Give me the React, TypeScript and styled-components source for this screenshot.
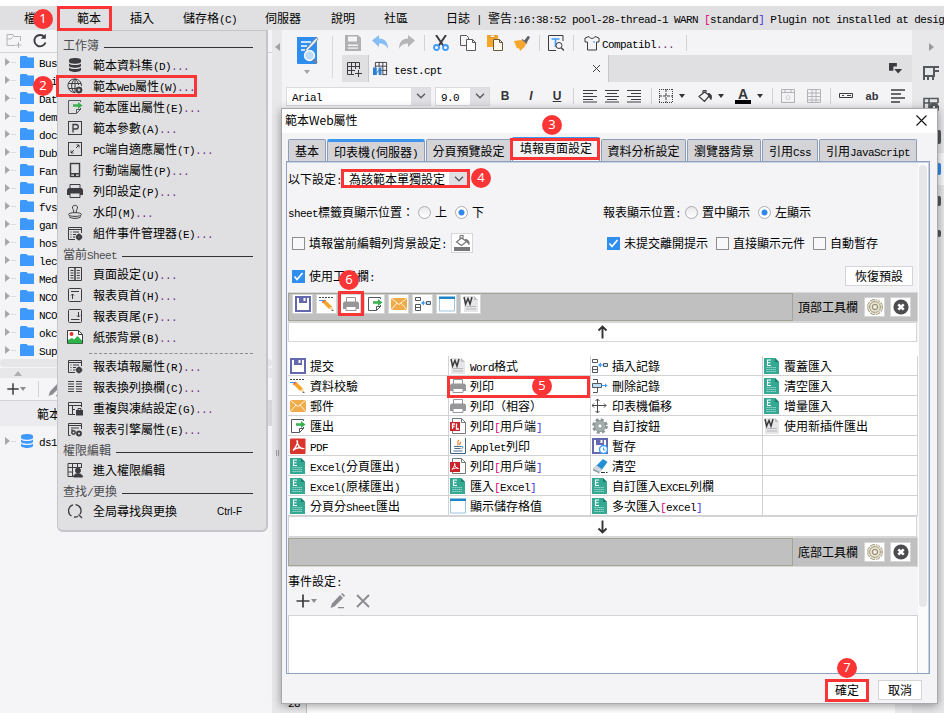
import React from "react";
import styled, { createGlobalStyle } from "styled-components";

const Global = createGlobalStyle`
  * { box-sizing: border-box; }
  body {
    margin: 0; width: 944px; height: 713px; overflow: hidden; background: #fff;
    font: 12px/16px "Noto Sans CJK TC", "Liberation Sans", sans-serif; color: #000;
  }
  svg { display: block; flex: none; }
`;

/* ---------- text ---------- */
const Label = styled.span<{ $color?: string; $ml?: number }>`
  white-space: pre; line-height: 16px; flex: none;
  color: ${(p) => p.$color || "inherit"};
  margin-left: ${(p) => p.$ml || 0}px;
`;
const Latin = styled.span<{ $tint?: string }>`
  font-family: "Liberation Mono", monospace; font-size: 11px; letter-spacing: -0.6px; line-height: 0;
  color: ${(p) => p.$tint || "inherit"};
`;
const tint = (s: string) => (s === "[" ? "#e0007a" : s === "]" ? "#4a30e0" : s === "..." ? "#6a2c80" : undefined);
const T = ({ children, color, ml }: { children: string; color?: string; ml?: number }) => (
  <Label $color={color} $ml={ml}>
    {children.split(/(\.\.\.|\[|\]|[\x20-\x5a\x5c\x5e-\x7e]+?(?=\.\.\.|[^\x20-\x5a\x5c\x5e-\x7e]|$))/).filter(Boolean).map((s, i) =>
      /^[\x20-\x7e]+$/.test(s) ? <Latin key={i} $tint={tint(s)}>{s}</Latin> : s
    )}
  </Label>
);

/* ---------- icons ---------- */
const K = "#3c3c40";
const glyphs: Record<string, React.ReactNode> = {
  db: <g fill={K}><path d="M2 3.2C2 .4 14 .4 14 3.2v1.5c0 2.6-12 2.6-12 0z" /><path d="M2 6.6c1.500 2 10.500 2 12 0v2.200c0 2.600-12 2.600-12 0z" /><path d="M2 10.600c1.500 2 10.500 2 12 0v2.200c0 2.900-12 2.900-12 0z" /></g>,
  dbBlue: <g fill="#3d9afc"><path d="M2 3.200C2 .4 14 .4 14 3.200v1.500c0 2.600-12 2.600-12 0z" /><path d="M2 6.600c1.500 2 10.500 2 12 0v2.200c0 2.600-12 2.600-12 0z" /><path d="M2 10.600c1.500 2 10.500 2 12 0v2.200c0 2.900-12 2.900-12 0z" /></g>,
  globe: <g fill="none" stroke={K}><path d="M8 14.500A6.800 6.800 0 1 1 14.500 8M1.500 5.500h12.500M1.500 10.500H9M8 1v14M8 1C3.500 4 3.500 12 8 15M8 1c2.500 2 3.500 4 3.500 6" /><circle cx="12" cy="12" r="2.300" strokeWidth="1.800" /><path d="M12 8.500v7M8.500 12h7M9.500 9.500l5 5M14.500 9.500l-5 5" strokeWidth=".8" /><circle cx="12" cy="12" r="1" fill="#e0e0e2" stroke="none" /></g>,
  export: <g fill="none"><path d="M13.500 3V1.500h-12v13h8l4-4h-4v4M13.500 9v2" stroke="#55585c" /><path d="M6 5.300h5V3l4.500 3.500L11 10V7.700H6z" fill="#3bb04f" /></g>,
  p: <g fill="none" stroke={K}><rect x="1.500" y="1.500" width="13" height="13" /><path d="M6 12.500V4.500h3a2 2 0 0 1 0 4.500H6" strokeWidth="1.300" /></g>,
  fit: <g fill="none" stroke={K}><rect x="1.500" y="1.500" width="13" height="13" /><path d="M9 7l3-3M9.500 4H12v2.500M7 9l-3 3M4 9.500V12h2.500" /></g>,
  phone: <g fill="none" stroke={K} strokeWidth="1.400"><rect x="3.500" y="1.500" width="9" height="13" /><path d="M3 11.800h10M7 13.300h2" /></g>,
  print: <g fill={K}><path d="M3 1.500h10v4H3z" fill="none" stroke={K} /><path d="M0 6.500 1.500 5h13L16 6.500V12H0z" /><path d="M3 10h10v4.500H3z" fill="#e0e0e2" stroke={K} /></g>,
  stamp: <g fill="none" stroke={K}><path d="M6.500 8.500C7.500 6 5 5 5.500 3c.5-2.200 4.500-2.200 5 0 .5 2-2 3-1 5.500" /><path d="M1.500 10.500c0-2.500 13-2.500 13 0s-13 2.500-13 0zM2 12.500c2 2.500 10 2.500 12 0" /></g>,
  form: <g fill="none" stroke={K}><path d="M14.500 8V2.500h-13v12H8M1.500 4.500h13" /><path d="M3.500 7h1M6 7h6M3.500 9.500h1M6 9.500h3M3.500 12h1M6 12h2" /><circle cx="12" cy="12" r="2" strokeWidth="1.900" /><path d="M12 8.500v7M8.500 12h7" strokeWidth="1.200" /></g>,
  pages: <g fill="none" stroke={K}><path d="M1.500 1.500h6.500v13H1.500zM8 1.500h6.500v13H8z" /><path d="M3.500 4.500h3M3.500 7h3M3.500 9.500h3M3.500 12h3M9.800 4.500h3M9.800 7h3M9.800 9.500h3M9.800 12h3" /></g>,
  head: <g fill="none" stroke={K}><rect x="1.500" y="1.500" width="13" height="13" rx="1" /><path d="M4 4.500h8M5.500 12V7M4 8.500 5.500 7 7 8.500" /></g>,
  foot: <g fill="none" stroke={K}><rect x="1.500" y="1.500" width="13" height="13" rx="1" /><path d="M4 11.500h8.500M11.500 4v5M10 7.500 11.500 9 13 7.500" /></g>,
  image: <g><path d="M.5 1.500h11l4 4v9H.5z" fill="#fff" stroke={K} /><path d="M11.500 1.500v4h4" fill="none" stroke={K} /><circle cx="4.500" cy="5" r="2" fill="#e5322e" /><path d="M1 14.500V11l4-2 2 1.500L10.500 7 15 11.500v3z" fill="#2db34a" /></g>,
  cols: <g stroke={K}><path d="M1 2.500h6M1 5h6M1 7.500h6M1 10h6M1 12.500h6M9 2.500h6M9 5h6M9 7.500h6M9 10h6M9 12.500h6" strokeWidth="1.200" /></g>,
  freeze: <g fill="none" stroke={K}><path d="M14.500 7V2.500h-13v12H8M1.500 5.500h13M5.500 5.500v9M5.500 9.500H8" /><rect x="9.500" y="10.500" width="6" height="4.500" fill={K} /><path d="M11 10.500V8.500h3v2" /></g>,
  engine: <g fill="none" stroke={K}><path d="M14.500 8V2.500h-13v12h2M1.500 4.500h13M4 7h8M4 9h2" /><circle cx="6.500" cy="11.500" r="1.700" strokeWidth="1.500" /><circle cx="12" cy="12.500" r="2" strokeWidth="1.900" /></g>,
  user: <g fill="none" stroke={K}><path d="M14.500 6V1.500H1v13h5M1 5.500h14M1 10h5M5.500 1.500V14M10.500 1.500V5" /><circle cx="11" cy="8.500" r="2.500" fill={K} /><path d="M6.500 15c0-4.500 9-4.500 9 0z" fill={K} /></g>,
  find: <g fill="none" stroke={K} strokeWidth="1.300"><path d="M4.500 13A6.200 6.200 0 0 1 6 1.800M8.500 1.600a6.200 6.200 0 0 1 4.500 9.600M11 13.300a6 6 0 0 1-4 .7M11.500 11.500 15 15" /></g>,
  save: <g><path d="M1 1h14v14H1z" fill="#fff" stroke="#6468ae" strokeWidth="2" /><path d="M4 1h8v6H4z" fill="#6468ae" /><path d="M8.500 2h2v3h-2z" fill="#fff" /><path d="M1 2v13h14V2" fill="none" stroke="#6468ae" strokeWidth="2" /></g>,
  saveClock: <g><path d="M1 1h14v14H1z" fill="#fff" stroke="#6468ae" strokeWidth="2" /><path d="M4 1h8v6H4z" fill="#6468ae" /><path d="M8.500 2h2v3h-2z" fill="#fff" /><circle cx="11.500" cy="11.500" r="4" fill="#fff" stroke="#3d9afc" strokeWidth="1.500" /><path d="M11.500 9.500v2.500h2" fill="none" stroke="#3d9afc" /></g>,
  verify: <g><path d="M0 1.500h14" stroke="#444" strokeDasharray="2 1" /><path d="M0 4.500h6" stroke="#3d9afc" /><path d="M3.500 6.500 6.300 4 13 10.500 10 13z" fill="#f6a62b" /><path d="M10 13l3-2.500 2 4.500z" fill="#f7d9ac" /><path d="M13 13.500l2 1.500-2.500-.3z" fill="#444" /><path d="M3.300 6.500 6 4" stroke="#e8664a" strokeWidth="1.500" /></g>,
  printGray: <g fill="#97979a"><path d="M3.500 1.500h9v5h-9z" fill="#fff" stroke="#97979a" /><path d="M0 7 1.500 5.500h13L16 7v6H0z" /><path d="M3 10.500h10v4H3z" fill="#fff" stroke="#97979a" /></g>,
  mail: <g><path d="M0 2h16v12H0z" fill="#f0ab4a" /><path d="M0 2l8 6.500L16 2M0 14l6-7M16 14l-6-7" fill="none" stroke="#fff3dd" /></g>,
  insert: <g fill="none" stroke="#55585c"><path d="M.5 1.500h5v3h-5zM.5 8.500h5v6h-5zM.5 11.500h5" /><path d="M11.500 5.500h4v3h-4z" fill="#bfe0fa" /><path d="M11 7H7" stroke="#3d9afc" /><path d="M6 7l3-2.500v5z" fill="#3d9afc" stroke="none" /></g>,
  remove: <g fill="none" stroke="#55585c"><path d="M1 1.500h4.500V5M1 14.500h4.500V10" /><path d="M.5 5.500h9v4h-9z" fill="#bfe0fa" /><path d="M10 7.500h4" stroke="#3d9afc" /><path d="M15.500 7.500 13 5.500v4z" fill="#3d9afc" stroke="none" /></g>,
  window: <g><path d="M.5 1.500h15v13.500H.5z" fill="#fff" stroke="#9cc4e2" /><path d="M0 .5h16V3H0z" fill="#1e86c8" /></g>,
  word: <g><path d="M1 0h10l4 4v12H1z" fill="#e6e6e8" /><path d="M11 0v4h4z" fill="#c0c0c2" /><path d="M1 1l1.600 7L5 2.500 7 8 9 1" fill="none" stroke="#3c3c3c" strokeWidth="1.500" /><path d="M3 10.500h10M3 13h10" stroke="#b8b8ba" /></g>,
  excel: <g><path d="M0 0h11l4 4v12H0z" fill="#33a893" /><path d="M11 0v4h4z" fill="#1e7d6c" /><path d="M7 2h-3.500v5.500H7M3.500 4.700h3" fill="none" stroke="#fff" strokeWidth="1.100" /><path d="M2.500 9.500h10M2.500 11.500h10M2.500 13.500h10" stroke="#a8dcd2" strokeDasharray="1.300 .7" /></g>,
  pdf: <g><rect y=".5" width="15.500" height="15.500" rx="1" fill="#d9352c" /><path d="M7 3c1.500 0 0 5-4 9.500C5 10 10 9 13 10.500c-3 .5-6-4-6-7.500z" fill="none" stroke="#fff" strokeWidth="1.300" /></g>,
  flash: <g><path d="M2.500.5h9l4 4v11h-13z" fill="#fff" stroke="#777" /><path d="M11.500.5v4h4" fill="none" stroke="#777" /><path d="M0 4h10v9H0z" fill="#cc2229" /><path d="M5 6H2.500v5M2.500 8.500h2M6.500 5.500V11H9" fill="none" stroke="#fff" strokeWidth="1.300" /></g>,
  pdfDoc: <g><path d="M2.500.5h9l4 4v11h-13z" fill="#fff" stroke="#777" /><path d="M11.500.5v4h4" fill="none" stroke="#777" /><path d="M0 4h10v10H0z" fill="#cc2229" /><path d="M4.500 5.500c1 0 0 3.500-2.500 6C4 10 6 9.500 8.500 10.500c-2 0-4-2.500-4-5z" fill="none" stroke="#fff" /></g>,
  java: <g fill="none"><path d="M0 0h16v16H0z" fill="#fff" /><path d="M.5 0v15.500h15V0" stroke="#3b6184" /><path d="M9 2C6 4.500 9.500 5 7.500 7.500M11 4c-1.500 1.500-1 2-1.500 3" stroke="#e8822a" strokeWidth="1.200" /><path d="M4 8.500h7.500M4.500 10.500h6M3.500 13h9M11.500 8.500c2-.5 2 1.500 0 2" stroke="#4a6f92" /></g>,
  move: <g fill="none" stroke="#4a4a4e"><path d="M5.500 1v14M0 7.500h14M3.500 3 5.500 1l2 2M3.500 13l2 2 2-2M2 5.500l-2 2 2 2M12 5.500l2 2-2 2" /></g>,
  gear: <g><circle cx="8" cy="8" r="6.300" fill="none" stroke="#8b9594" strokeWidth="3" strokeDasharray="2.800 2.150" /><circle cx="8" cy="8" r="5.500" fill="#a6b0af" stroke="#8b9594" /><circle cx="8" cy="8" r="2.200" fill="#fff" stroke="#8b9594" /></g>,
  erase: <g><path d="M4.500 7.500 11 1l4.500 3L10 11.500z" fill="#2290d2" /><path d="M4.500 7.500 10 11.500 7.500 14 1 11z" fill="#d4dae0" stroke="#9aa6b0" strokeWidth=".6" /><path d="M1 11l6.500 3v1.500L1 12.500z" fill="#8c98a4" /><path d="M9 14.500h6.500" stroke="#333" strokeDasharray="4 1" /></g>,
  cog: <g><circle cx="8" cy="8" r="6.500" fill="none" stroke="#8f8873" strokeWidth="2.800" strokeDasharray="4.100 1" /><circle cx="8" cy="8" r="6.500" fill="none" stroke="#efe9d3" strokeWidth="1.500" strokeDasharray="3.500 1.600" strokeDashoffset="-.3" /><circle cx="8" cy="8" r="5.200" fill="#efe9d3" stroke="#a79f86" strokeWidth=".7" /><circle cx="8" cy="8" r="2.800" fill="#dcd6bf" stroke="#8f8873" /><circle cx="8" cy="8" r="1" fill="#fff" /></g>,
  close: <g><circle cx="8" cy="8" r="7.600" fill="#4d4d4f" /><path d="M5.300 5.300l5.400 5.400M10.700 5.300l-5.400 5.400" stroke="#fff" strokeWidth="2.600" /></g>,
  bucket: <g fill="none" stroke="#77777a"><path d="M6 .5h3v3M6 4V.5M2.500 7 7.500 3l5 3.500-5 4z" strokeWidth="1.200" /><path d="M11 4.500c3 0 4.500 1.500 4 5l-2.500-3z" fill="#77777a" /><path d="M0 14h16" strokeWidth="4" stroke="#77777a" /></g>,
  bucketDark: <g fill="none" stroke={K}><path d="M6 2.500h3v3M6 5V2.500M2 8.500 7.500 4l5 3.500-5 6z" strokeWidth="1.200" /><path d="M11 5.500c3 0 4 2 3 6l-2-3z" fill={K} /></g>,
  folder: <path d="M1 3 2 2h5.500L9 3.500h6V14H1z" fill="#3d9afc" />,
  folderAdd: <g fill="none" stroke="#b4b4b8"><path d="M14.500 8V3.500H8L7 1.500H1v11h8M1 6h4l2-2.500M12.500 9v6M9.500 12h6" /></g>,
  refresh: <g fill="none" stroke={K} strokeWidth="1.900"><path d="M13.500 9.500A5.700 5.700 0 1 1 12.500 4" /><path d="M13.800.8v5h-5z" fill={K} stroke="none" /></g>,
  plus: <path d="M8 1.500v13M1.500 8h13" stroke={K} strokeWidth="1.700" />,
  pencil: <g fill="#8c8c90"><path d="M1.500 15 3 10.500 11 2l3 3-8.500 8.500z" /><path d="M9 14h6v1.200H9zM12 1l1.200-1L16 2.500 15 4z" /></g>,
  cross: <path d="M2 2l12 12M14 2 2 14" stroke="#8c8c90" strokeWidth="1.900" />,
  disk: <g><path d="M0 0h13l3 3v13H0z" fill="#b0b0b3" /><path d="M3 1.500h9v5H3zM3 9.500h10v1.500H3zM3 12.500h10v1.200H3z" fill="#f4f4f7" /></g>,
  undo: <path d="M0 5.500 7 0v3.500c6 0 9 4 9 10.500-2-4-4.500-5.500-9-5.500V12z" fill="#86bdf3" />,
  redo: <path d="M16 5.500 9 0v3.500C3 3.500 0 7.500 0 14c2-4 4.500-5.500 9-5.500V12z" fill="#b5b5b8" />,
  cut: <g fill="none"><path d="M3 0l7.500 11M13 0 5.500 11" stroke={K} strokeWidth="2" /><circle cx="3.500" cy="12.500" r="2.500" stroke="#3d9afc" strokeWidth="1.800" /><circle cx="12.500" cy="12.500" r="2.500" stroke="#3d9afc" strokeWidth="1.800" /></g>,
  copy: <g fill="#f4f4f7" stroke="#55585c"><path d="M.5.500h6l2 2v8h-8z" /><path d="M6.500 4.500h6l3 3v8h-9z" fill="#fff" /><path d="M12.500 4.500v3h3" fill="none" /></g>,
  paste: <g><path d="M0 0h11v12H0z" fill="#f6a62b" /><path d="M3 0h5v2.500H3z" fill="#fff3d8" stroke="#c57f12" strokeWidth=".7" /><path d="M6.500 4.500h6l3 3v8h-9z" fill="#fffbee" stroke="#6b5a3a" /><path d="M12.500 4.500v3h3" fill="none" stroke="#6b5a3a" /></g>,
  brush: <g><path d="M10 6 14 .8l2 1.500L12.500 8z" fill="#5a5f68" /><path d="M0 6l7-1 5 3.500-1 3-5 4.500-1-3-2 .5z" fill="#f6a62b" /><path d="M8 4.500l5 4" stroke="#7a6a50" strokeWidth="1.500" /></g>,
  textFind: <g fill="none" stroke={K}><path d="M15 6V.5H.5v15H8" /><path d="M3.500 4h8M7.500 4v8" stroke="#3d9afc" strokeWidth="1.600" /><circle cx="11" cy="10.500" r="3" fill="#f4f4f7" /><path d="M13.200 12.700 16 15.500" strokeWidth="1.400" /></g>,
  shirt: <g fill="none" stroke={K}><path d="M5 1.500 1 3v4h2.500v8h9V7H15V3l-4-1.500C10 4 6 4 5 1.500z" /><path d="M9 7h2" stroke="#3d9afc" /></g>,
  gridAdd: <g fill="none" stroke={K}><path d="M1.500 1.500h12V8M1.500 1.500v12H8M1.500 5.500h12M1.500 9.500H9M5.500 1.500v12M9.500 1.500V8M12.500 9v7M9 12.500h7" /></g>,
  cptIcon: <g fill="none" stroke={K}><path d="M2.500 7V1.500h12v13H10M2.500 5.500h12M6.500 1.500v4M10.500 1.500v13M9 10h6" /><path d="M0 7h4v8H0zM6 7h3v8H6z" fill="#2f7fd0" stroke="none" /><path d="M3 14 7.500 8" stroke="#2f7fd0" /></g>,
  left: <path d="M1 2.500h14M1 5.500h10M1 8.500h14M1 11.500h10M1 14h14" stroke={K} />,
  center: <path d="M1 2.500h14M3 5.500h10M1 8.500h14M3 11.500h10M1 14h14" stroke={K} />,
  right: <path d="M1 2.500h14M5 5.500h10M1 8.500h14M5 11.500h10M1 14h14" stroke={K} />,
  justify: <path d="M1 2h14M1 6h10M1 10h14M1 14h9" stroke={K} strokeWidth="1.700" />,
  border: <g fill="none" stroke={K}><path d="M1 1.500h14M1 14.500h14M1.500 1v14M14.500 1v14" strokeDasharray="1 1" /><path d="M1 8h14M8 1v14" strokeDasharray="3 1" /></g>,
  merge: <g fill="none" stroke="#b4b4b8"><path d="M1.500 1.500h13v13h-13zM1.500 4.500h13M5 1.500v3M11 1.500v3" /><circle cx="8" cy="9.500" r="2" stroke="#d0d0d4" /></g>,
  grid: <g fill="none" stroke="#b4b4b8"><path d="M1.500 1.500h13v13h-13zM1.500 5h13M1.500 8.500h13M1.500 12h13M6 1.500v13M10 1.500v13" /></g>,
  field: <g fill="none" stroke={K}><path d="M1.500 5.500h13v4h-13z" /><path d="M4 7.500h2M9 7.500h4" /></g>,
  cellAttr: <g fill="none" stroke="#55585c" strokeWidth="2"><path d="M16 2H1v13M11 2v9H1M5 11v4M10 11v4M11 6h5" /></g>,
  cellInfo: <g fill="none" stroke="#55585c" strokeWidth="1.600"><path d="M15 6V1.500H1v13h6M1 6h14M6 1.500V14" /><circle cx="11" cy="11" r="4.500" fill="#55585c" /><path d="M11 9v4" stroke="#fff" /></g>,
  flag: <g fill={K}><path d="M0 1h9v4H5v5H0z" /><path d="M6 8h9l-4.500 5z" /></g>,
};
const Icon = ({ n, s = 16 }: { n: string; s?: number }) => (
  <svg width={s} height={s} viewBox="0 0 16 16">{glyphs[n]}</svg>
);
const Chevron = ({ c = "#55585c" }: { c?: string }) => (
  <svg width="10" height="6" viewBox="0 0 10 6"><path d="M1 .8 5 4.800 9 .8" fill="none" stroke={c} strokeWidth="1.300" /></svg>
);
const Triangle = styled.i<{ $dir: "down" | "up" | "left" | "right"; $c?: string; $s?: number }>`
  width: 0; height: 0; flex: none; border: ${(p) => p.$s || 4}px solid transparent;
  ${(p) => {
    const c = p.$c || "#a2a2a5";
    const s = p.$s || 4;
    if (p.$dir === "down") return `border-top: ${s + 1}px solid ${c}; border-bottom: 0;`;
    if (p.$dir === "up") return `border-bottom: ${s + 1}px solid ${c}; border-top: 0;`;
    if (p.$dir === "left") return `border-right: ${s + 1}px solid ${c}; border-left: 0;`;
    return `border-left: ${s + 1}px solid ${c}; border-right: 0;`;
  }}
`;

/* ---------- frame ---------- */
const Page = styled.div`
  position: relative; width: 944px; height: 713px; overflow: hidden; display: flex; flex-direction: column; padding-top: 6px;
`;
const MenuBar = styled.div`
  height: 24px; background: #e0e0e2; display: flex; align-items: center; padding-left: 24px; flex: none;
`;
const MenuTitle = styled.div<{ $w: number }>`width: ${(p) => p.$w}px; flex: none; display: flex; padding-bottom: 1px;`;
const Body = styled.div`flex: 1; display: flex; min-height: 0;`;

/* ---------- left side ---------- */
const Side = styled.div`width: 272px; background: #f5f5f8; display: flex; flex-direction: column; overflow: hidden;`;
const SideTools = styled.div`
  height: 23px; border-bottom: 1px solid #d4d4d8; display: flex; align-items: center; gap: 10px; padding: 0 6px; flex: none;
`;
const TreeRow = styled.div`height: 18px; display: flex; align-items: center; padding-left: 5px; flex: none;`;
const Twig = styled.i`width: 5px; height: 1px; background: #dcdce0; margin: 0 3px 0 1px;`;
const Scroll = styled.div`height: 8px; border-radius: 4px; background: #e6e6e8; flex: none;`;
const SplitBar = styled.div`height: 10px; background: #e8e8ea; display: flex; align-items: center; padding-left: 14px; margin-top: 1px; flex: none;`;
const DataTools = styled.div`
  height: 23px; border-bottom: 1px solid #d4d4d8; display: flex; align-items: center; padding-left: 6px; flex: none;
`;
const DataTab = styled.div`
  height: 25px; background: #ececf0; border-right: 5px solid #d8d8dc; display: flex; align-items: center; padding-left: 37px; flex: none; margin-bottom: 6px;
`;
const Sep = styled.i<{ $l: number; $r: number; $h?: number }>`
  width: 1px; height: ${(p) => p.$h || 16}px; background: #d2d2d6; margin: 0 ${(p) => p.$r}px 0 ${(p) => p.$l}px; flex: none;
`;
const Gutter = styled.div`
  width: 10px; background: #e8e8ea; display: flex; flex-direction: column; align-items: center; padding-top: 13px; flex: none;
`;
const Grip = styled.i`width: 3px; height: 6px; border: solid #a8a8ac; border-width: 0 1px; margin-top: 399px;`;

/* ---------- editor ---------- */
const Editor = styled.div`width: 630px; background: #f4f4f7; display: flex; flex-direction: column; flex: none;`;
const EditorTop = styled.div`height: 52px; display: flex; flex: none;`;
const BigTool = styled.div`
  width: 51px; height: 42px; margin-top: 6px; border-right: 1px solid #d8d8dc; display: flex; flex-direction: column; align-items: center; gap: 5px;
`;
const TopRight = styled.div`flex: 1; margin-left: 9px;`;
const QuickBar = styled.div`height: 25px; display: flex; align-items: center; padding-left: 3px;`;
const QuickItem = styled.div<{ $w: number }>`width: ${(p) => p.$w}px; flex: none;`;
const FileTabs = styled.div`height: 27px; background: #e0e0e2; display: flex; align-items: center;`;
const NewTab = styled.div`width: 27px; height: 27px; border-right: 1px solid #c8c8cc; display: flex; align-items: center; padding-left: 4px;`;
const FileTab = styled.div`
  width: 240px; height: 27px; background: #f4f4f7; border-right: 1px solid #c8c8cc; display: flex; align-items: center; padding: 0 7px 0 4px; gap: 6px;
`;
const Grow = styled.i`flex: 1;`;
const FormatBar = styled.div`height: 28px; display: flex; align-items: center; padding-left: 4px; flex: none;`;
const Combo = styled.div<{ $w: number; $mr: number }>`
  width: ${(p) => p.$w}px; height: 19px; border: 1px solid #dadade; background: #fff; display: flex; align-items: center; padding-left: 5px; margin-right: ${(p) => p.$mr}px; flex: none;
`;
const ComboArrow = styled.div<{ $w?: number }>`
  width: ${(p) => p.$w || 19}px; height: 100%; background: #e0e0e4; margin-left: auto; display: flex; align-items: center; justify-content: center;
`;
const FontMark = styled.span<{ $w: number; $i?: boolean; $u?: boolean; $size?: number }>`
  width: ${(p) => p.$w}px; flex: none; font: ${(p) => (p.$i ? "italic" : "normal")} bold ${(p) => p.$size || 12}px "Liberation Sans", sans-serif;
  text-decoration: ${(p) => (p.$u ? "underline" : "none")}; color: #33333a; text-align: center;
`;
const ColorA = styled.span`
  width: 16px; height: 16px; margin-right: 6px; border-bottom: 4px solid #000; font: bold 14px/12px "Liberation Sans", sans-serif; text-align: center; color: #33333a; flex: none;
`;
const Slot = styled.span<{ $mr: number }>`margin-right: ${(p) => p.$mr}px; flex: none; display: flex;`;
const Sheet = styled.div`flex: 1; display: flex;`;
const RowHead = styled.div`width: 25px; background: #ececee; border-right: 1px solid #c4c4c8; display: flex; align-items: flex-end; justify-content: center; padding-bottom: 3px;`;
const Paper = styled.div`flex: 1; background: #fff;`;
const SheetScroll = styled.div`width: 17px; background: #f0f0f2;`;
const RightDock = styled.div`
  width: 32px; background: #e8e8ea; display: flex; flex-direction: column; align-items: center; padding: 13px 0 0 6px; flex: none;
`;
const DockItem = styled.div<{ $on?: boolean }>`
  width: 32px; margin-left: -6px; height: 32px; display: flex; align-items: center; justify-content: flex-end; padding-right: 5px; flex: none;
  background: ${(p) => (p.$on ? "#fafafc" : "transparent")};
  &:nth-child(2) { margin-top: 6px; }
  &:nth-child(n+4) { padding-right: 3px; }
`;
const DockBlock = styled.i<{ $c: string; $h: number }>`width: 12px; height: ${(p) => p.$h}px; border-radius: 2px; background: ${(p) => p.$c};`;

/* ---------- dropdown ---------- */
const Drop = styled.div`
  position: absolute; left: 57px; top: 30px; width: 211px; height: 502px; background: #e0e0e2; border: 1px solid #c3c5ca; border-width: 1px 2px 2px 1px;
  border-radius: 0 0 6px 6px; padding: 4px 0 0 5px;
`;
const Section = styled.div`
  height: 20px; display: flex; align-items: center; gap: 5px; padding-right: 13px; color: #4a4a4e;
  &::after { content: ""; flex: 1; height: 1px; background: #333; margin-top: 4px; }
`;
const Entry = styled.div`height: 21px; display: flex; align-items: center; padding: 0 0 1px 4px; gap: 10px;`;
const Dashes = styled.div`height: 8px; padding-top: 5px; margin: 0 13px 0 26px; &::after { content: ""; display: block; border-top: 1px dashed #8e8e92; }`;
const Shortcut = styled.span`margin-left: 30px; font: 10px "Liberation Sans", sans-serif;`;

/* ---------- dialog ---------- */
const Dialog = styled.div`
  position: absolute; left: 281px; top: 108px; width: 657px; height: 596px; background: #f4f4f7; border: 1px solid #a9a9ad;
  box-shadow: 0 2px 9px rgba(0,0,0,.38); display: flex; flex-direction: column;
`;
const TitleBar = styled.div`
  height: 24px; background: #fff; display: flex; align-items: center; justify-content: space-between; padding: 0 10px 2px 3px; flex: none;
`;
const Tabs = styled.div`height: 28px; display: flex; align-items: flex-end; padding-left: 6px; gap: 1px; flex: none;`;
const Tab = styled.div<{ $w: number; $on?: boolean; $blue?: boolean }>`
  width: ${(p) => p.$w}px; height: ${(p) => (p.$on ? 25 : 22)}px; background: ${(p) => (p.$on ? "#f4f4f7" : "#d4d4d8")};
  border: 1px solid #8ba0b8; border-bottom: 0; border-top: ${(p) => (p.$blue ? "3px solid #3d97ee" : "1px solid #8ba0b8")};
  border-radius: 2px 2px 0 0; display: flex; align-items: center; justify-content: center; flex: none; padding-bottom: ${(p) => (p.$on ? 6 : 0)}px;
  margin-bottom: ${(p) => (p.$on ? -1 : 0)}px;
`;
const Panel = styled.div`
  margin: 0 7px 0 4px; height: 513px; border: 1px solid #8ea2c0; box-shadow: inset 0 1px #c8d2e2, inset -1px 0 #c8d2e2; padding: 1px 0 0 1px; display: flex; flex: none;
`;
const Content = styled.div`width: 630px; display: flex; flex-direction: column; flex: none;`;
const Track = styled.div`flex: 1; margin-right: 1px; padding: 2px 0 0 1px; background: #fbfbfc;`;
const Thumb = styled.div`width: 8px; height: 442px; border-radius: 4px; background: #e6e6e9;`;
const Line = styled.div<{ $h: number; $pt?: number }>`
  height: ${(p) => p.$h}px; padding-top: ${(p) => p.$pt || 0}px; display: flex; align-items: center; flex: none;
`;
const Half = styled.div<{ $w?: number }>`width: ${(p) => (p.$w ? p.$w + "px" : "auto")}; display: flex; align-items: center; flex: none;`;
const Select = styled.div`
  width: 127px; height: 18px; margin-left: 1px; background: #fff; border: 1px solid #d8d8dc; display: flex; align-items: center; padding-left: 5px;
`;
const Radio = styled.i<{ $on?: boolean; $ml: number }>`
  width: 13px; height: 13px; border-radius: 50%; border: 1px solid #acacb0; margin: 0 4px 0 ${(p) => p.$ml}px; flex: none;
  background: ${(p) => (p.$on ? "radial-gradient(circle, #2f86ec 0 2.6px, #fff 3.4px)" : "linear-gradient(#e8e8ea, #fff)")};
`;
const Box = styled.i<{ $on?: boolean; $ml: number }>`
  width: 13px; height: 13px; margin: 0 4px 0 ${(p) => p.$ml}px; border: 1px solid ${(p) => (p.$on ? "#2f8fee" : "#8e8e92")};
  background: ${(p) => (p.$on ? "#2f8fee" : "#f8f8fa")}; flex: none; display: flex; align-items: center; justify-content: center;
`;
const Check = ({ on, ml }: { on?: boolean; ml: number }) => (
  <Box $on={on} $ml={ml}>{on && <svg width="11" height="11" viewBox="0 0 11 11"><path d="M1.500 5.500 4 8.500 9.500 2" fill="none" stroke="#fff" strokeWidth="1.700" /></svg>}</Box>
);
const Button = styled.button<{ $w: number; $ml?: number }>`
  all: unset; box-sizing: border-box; width: ${(p) => p.$w}px; height: 20px; margin-left: ${(p) => p.$ml || 0}px; border: 1px solid #d4d4d8; background: #fff;
  display: flex; align-items: center; justify-content: center; flex: none;
`;
const Strip = styled.div`height: 30px; background: #c0c0c0; border: 1px solid #d8d8d8; border-left: 0; display: flex; flex: none;`;
const StripMain = styled.div`width: 505px; border: 1px solid #a3a396; display: flex; gap: 3px; padding-left: 3px; flex: none;`;
const StripSide = styled.div`flex: 1; display: flex; align-items: center; padding: 0 6px 0 5px;`;
const Tool = styled.div<{ $w?: number; $ml?: number }>`
  width: ${(p) => p.$w || 21}px; height: 20px; background: #fff; border: 1px solid #d6d6d6; display: flex; align-items: center; justify-content: center; margin-left: ${(p) => p.$ml || 0}px; flex: none;
`;
const ArrowRow = styled.div<{ $h: number }>`
  height: ${(p) => p.$h}px; background: #fff; border: 1px solid #d6d6d8; margin-right: 1px; display: flex; align-items: center; justify-content: center; flex: none;
`;
const Spacer = styled.div`height: 14px; background: #fff; flex: none;`;
const Table = styled.div`display: grid; grid-template-columns: 161px 142px 172px 155px; grid-auto-rows: 20px; background: #fff; flex: none;`;
const Cell = styled.div`
  border-right: 1px solid #d2d2d4; border-bottom: 1px solid #d2d2d4; display: flex; align-items: center; gap: 4px; padding-left: 1px;
  &:nth-child(4n+1) { padding-left: 2px; }
`;
const EventTools = styled.div`height: 20px; display: flex; align-items: center; padding-left: 7px; flex: none;`;
const EventList = styled.div`flex: 1; margin-top: 4px; background: #fff; border: 1px solid #d2d2d6; border-bottom: 0;`;
const Footer = styled.div`flex: 1; display: flex; align-items: center; padding-left: 545px; padding-top: 3px;`;

/* ---------- annotations ---------- */
const Frame = styled.div<{ $b: [number, number, number, number] }>`
  position: absolute; left: ${(p) => p.$b[0]}px; top: ${(p) => p.$b[1]}px; width: ${(p) => p.$b[2]}px; height: ${(p) => p.$b[3]}px; border: 3px solid #fb3535;
`;
const Badge = styled.div<{ $x: number; $y: number }>`
  position: absolute; left: ${(p) => p.$x - 10}px; top: ${(p) => p.$y - 10}px; width: 20px; height: 20px; border-radius: 50%; background: #fb3535; color: #fff;
  font: 13px/19px "Noto Sans", sans-serif; text-align: center;
`;

const titles: [string, number][] = [["檔案", 53], ["範本", 53], ["插入", 53], ["儲存格(C)", 82], ["伺服器", 66], ["說明", 53], ["社區", 62],
  ["日誌 | 警告:16:38:52 pool-28-thread-1 WARN [standard] Plugin not installed at desig", 498]];
const tree = ["Bus", "chi", "Dat", "dem", "doc", "Dub", "Fan", "Fun", "fvs", "gan", "hos", "lec", "Med", "NCO", "NCO", "okc", "Sup"];
const g1 = [["db", "範本資料集(D)..."], ["globe", "範本Web屬性(W)..."], ["export", "範本匯出屬性(E)..."], ["p", "範本參數(A)..."], ["fit", "PC端自適應屬性(T)..."],
  ["phone", "行動端屬性(P)..."], ["print", "列印設定(P)..."], ["stamp", "水印(M)..."], ["form", "組件事件管理器(E)..."]];
const g2 = [["pages", "頁面設定(U)..."], ["head", "報表頁首(H)..."], ["foot", "報表頁尾(F)..."], ["image", "紙張背景(B)..."]];
const g3 = [["form", "報表填報屬性(R)..."], ["cols", "報表換列換欄(C)..."], ["freeze", "重複與凍結設定(G)..."], ["engine", "報表引擎屬性(E)..."]];
const quick: [string, number][] = [["disk", 27], ["undo", 27], ["redo", 26]];
const tabs: [string, number, boolean?, boolean?][] = [["基本", 38], ["印表機(伺服器)", 98, false, true], ["分頁預覽設定", 85], ["填報頁面設定", 88, true, true],
  ["資料分析設定", 85], ["瀏覽器背景", 74], ["引用Css", 56], ["引用JavaScript", 98]];
const cells: [string, string][] = [
  ["save", "提交"], ["word", "Word格式"], ["insert", "插入記錄"], ["excel", "覆蓋匯入"],
  ["verify", "資料校驗"], ["printGray", "列印"], ["remove", "刪除記錄"], ["excel", "清空匯入"],
  ["mail", "郵件"], ["printGray", "列印（相容）"], ["move", "印表機偏移"], ["excel", "增量匯入"],
  ["export", "匯出"], ["flash", "列印[用戶端]"], ["gear", "自訂按鈕"], ["word", "使用新插件匯出"],
  ["pdf", "PDF"], ["java", "Applet列印"], ["saveClock", "暫存"], ["", ""],
  ["excel", "Excel(分頁匯出)"], ["pdfDoc", "列印[用戶端]"], ["erase", "清空"], ["", ""],
  ["excel", "Excel(原樣匯出)"], ["excel", "匯入[Excel]"], ["excel", "自訂匯入EXCEL列欄"], ["", ""],
  ["excel", "分頁分Sheet匯出"], ["window", "顯示儲存格值"], ["excel", "多次匯入[excel]"], ["", ""],
];

const Entries = ({ list }: { list: string[][] }) => (
  <>{list.map(([n, t]) => <Entry key={t}><Icon n={n} /><T>{t}</T></Entry>)}</>
);
const ToolStrip = ({ label, tools }: { label: string; tools: string[] }) => (
  <Strip>
    <StripMain>{tools.map((n) => <Tool key={n}><Icon n={n} /></Tool>)}</StripMain>
    <StripSide><T>{label}</T><Tool $ml={6}><Icon n="cog" /></Tool><Tool $ml={5}><Icon n="close" /></Tool></StripSide>
  </Strip>
);

export default function App() {
  return (
    <Page>
      <Global />
      <MenuBar>{titles.map(([t, w]) => <MenuTitle key={t} $w={w}><T>{t}</T></MenuTitle>)}</MenuBar>
      <Body>
        <Side>
          <SideTools><Icon n="folderAdd" /><Icon n="refresh" /></SideTools>
          {tree.map((t, i) => (
            <TreeRow key={i}><Triangle $dir="right" $c="#a8a8ab" /><Twig /><Icon n="folder" /><T ml={4}>{t}</T></TreeRow>
          ))}
          <Scroll />
          <SplitBar><Triangle $dir="up" $c="#b0b0b3" /></SplitBar>
          <DataTools><Icon n="plus" s={14} /><Triangle $dir="down" $s={3} $c="#8c8c90" /><Sep $l={12} $r={8} /><Icon n="pencil" /></DataTools>
          <DataTab><T>範本資料集</T></DataTab>
          <TreeRow><Triangle $dir="right" $c="#a8a8ab" /><Twig /><Icon n="dbBlue" /><T ml={4}>ds1</T></TreeRow>
        </Side>
        <Gutter><Triangle $dir="left" /><Grip /></Gutter>
        <Editor>
          <EditorTop>
            <BigTool>
              <svg width="23" height="29" viewBox="0 0 23 29">
                <path d="M1 1h20v26a1 1 0 0 1-1 1H2a1 1 0 0 1-1-1z" fill="#2f8df0" />
                <path d="M5 6h10M5 10h6M5 14h4" stroke="#fff" strokeWidth="1.500" />
                <path d="M9 14 18 4l3-2.500 1 1.500-3 4-8 8z" fill="#e8eef6" stroke="#777c84" strokeWidth=".7" />
                <circle cx="13.500" cy="19.500" r="5" fill="#bcdcfb" stroke="#fff" strokeWidth="1.300" /><path d="M17 23.500l4 3.500" stroke="#7a7f88" strokeWidth="1.700" />
              </svg>
              <Triangle $dir="down" $s={3} />
            </BigTool>
            <TopRight>
              <QuickBar>
                {quick.map(([n, w]) => <QuickItem key={n} $w={w}><Icon n={n} /></QuickItem>)}
                <Sep $l={-1} $r={8} />
                <QuickItem $w={27}><Icon n="cut" /></QuickItem><QuickItem $w={27}><Icon n="copy" /></QuickItem>
                <QuickItem $w={27}><Icon n="paste" /></QuickItem><QuickItem $w={16}><Icon n="brush" /></QuickItem>
                <Sep $l={9} $r={8} /><Icon n="textFind" /><Sep $l={9} $r={10} /><Icon n="shirt" /><T ml={2}>Compatibl...</T><Sep $l={12} $r={0} />
              </QuickBar>
              <FileTabs>
                <NewTab><Icon n="gridAdd" /></NewTab>
                <FileTab><Icon n="cptIcon" s={15} /><T>test.cpt</T><Grow /><svg width="9" height="9" viewBox="0 0 9 9"><path d="M1 1l7 7M8 1 1 8" stroke="#444" /></svg></FileTab>
                <Grow /><Slot $mr={9}><Icon n="flag" s={14} /></Slot>
              </FileTabs>
            </TopRight>
          </EditorTop>
          <FormatBar>
            <Combo $w={145} $mr={4}><T>Arial</T><ComboArrow><Chevron /></ComboArrow></Combo>
            <Combo $w={55} $mr={2}><T>9.0</T><ComboArrow><Chevron /></ComboArrow></Combo>
            <FontMark $w={26}>B</FontMark><FontMark $w={26} $i>I</FontMark><FontMark $w={26} $u>U</FontMark>
            <Sep $l={3} $r={8} /><Slot $mr={6}><Icon n="left" /></Slot><Slot $mr={6}><Icon n="center" /></Slot><Icon n="right" />
            <Sep $l={9} $r={6} /><Slot $mr={5}><Icon n="border" /></Slot><Slot $mr={12}><Triangle $dir="down" $c="#333" $s={3} /></Slot>
            <Slot $mr={5}><Icon n="bucketDark" /></Slot><Slot $mr={11}><Triangle $dir="down" $c="#333" $s={3} /></Slot>
            <ColorA>A</ColorA><Triangle $dir="down" $c="#333" $s={3} />
            <Sep $l={9} $r={7} /><Slot $mr={10}><Icon n="merge" /></Slot><Icon n="grid" />
            <Sep $l={8} $r={7} /><Icon n="field" /><FontMark $w={36} $size={11}>ab</FontMark><Icon n="justify" />
          </FormatBar>
          <Sheet><RowHead><T>28</T></RowHead><Paper /><SheetScroll /></Sheet>
        </Editor>
        <RightDock>
          <Triangle $dir="right" $c="#9a9a9e" />
          <DockItem><Icon n="cellAttr" /></DockItem>
          <DockItem><Icon n="cellInfo" /></DockItem>
          <DockItem><DockBlock $c="#55585c" $h={14} /></DockItem>
          <DockItem $on><DockBlock $c="#2f8fee" $h={12} /></DockItem>
          <DockItem><DockBlock $c="#55585c" $h={10} /></DockItem>
          <DockItem><DockBlock $c="#55585c" $h={7} /></DockItem>
        </RightDock>
      </Body>

      <Drop>
        <Section><T>工作簿</T></Section>
        <Entries list={g1} />
        <Section><T>當前Sheet</T></Section>
        <Entries list={g2} />
        <Dashes />
        <Entries list={g3} />
        <Section><T>權限編輯</T></Section>
        <Entry><Icon n="user" /><T>進入權限編輯</T></Entry>
        <Section><T>查找/更換</T></Section>
        <Entry><Icon n="find" /><T>全局尋找與更換</T><Shortcut>Ctrl-F</Shortcut></Entry>
      </Drop>

      <Dialog>
        <TitleBar><Label>範本Web屬性</Label><svg width="11" height="11" viewBox="0 0 11 11"><path d="M.5.500l10 10M10.500.5l-10 10" stroke="#111" strokeWidth="1.100" /></svg></TitleBar>
        <Tabs>{tabs.map(([t, w, on, blue]) => <Tab key={t} $w={w} $on={on} $blue={blue}><T>{t}</T></Tab>)}</Tabs>
        <Panel>
          <Content>
            <Line $h={31}><T>以下設定:</T><Select><T>為該範本單獨設定</T><ComboArrow $w={20}><Chevron /></ComboArrow></Select></Line>
            <Line $h={36}>
              <Half $w={315}><T>sheet標籤頁顯示位置：</T><Radio $ml={4} /><T>上</T><Radio $on $ml={8} /><T>下</T></Half>
              <Half><T>報表顯示位置:</T><Radio $ml={4} /><T>置中顯示</T><Radio $on $ml={8} /><T>左顯示</T></Half>
            </Line>
            <Line $h={26}>
              <Half $w={315}><Check ml={4} /><T>填報當前編輯列背景設定:</T><Tool $w={22} $ml={4}><Icon n="bucket" /></Tool></Half>
              <Half><Check on ml={4} /><T>未提交離開提示</T><Check ml={8} /><T>直接顯示元件</T><Check ml={8} /><T>自動暫存</T></Half>
            </Line>
            <Line $h={36} $pt={4}><Check on ml={4} /><T>使用工具欄:</T><Button $w={68} $ml={470}><T>恢復預設</T></Button></Line>
            <ToolStrip label="頂部工具欄" tools={["save", "verify", "printGray", "export", "mail", "insert", "window", "word"]} />
            <ArrowRow $h={20}><svg width="11" height="14" viewBox="0 0 11 14"><path d="M5.500 13.500V2M1.500 5.500l4-4 4 4" fill="none" stroke="#333" strokeWidth="1.900" /></svg></ArrowRow>
            <Spacer />
            <Table>{cells.map(([n, t], i) => <Cell key={i}>{n && <><Icon n={n} /><T>{t}</T></>}</Cell>)}</Table>
            <ArrowRow $h={21}><svg width="11" height="14" viewBox="0 0 11 14"><path d="M5.500.5V12M1.500 8.500l4 4 4-4" fill="none" stroke="#333" strokeWidth="1.900" /></svg></ArrowRow>
            <ToolStrip label="底部工具欄" tools={[]} />
            <Line $h={24} $pt={4}><T>事件設定:</T></Line>
            <EventTools><Icon n="plus" /><Triangle $dir="down" $s={3} $c="#8c8c90" /><Slot $mr={12}><i /></Slot><Icon n="pencil" /><Slot $mr={10}><i /></Slot><Icon n="cross" /></EventTools>
            <EventList />
          </Content>
          <Track><Thumb /></Track>
        </Panel>
        <Footer><Button $w={40}><T>確定</T></Button><Button $w={44} $ml={11}><T>取消</T></Button></Footer>
      </Dialog>

      <Frame $b={[57, 6, 55, 25]} /><Frame $b={[56, 75, 141, 22]} /><Frame $b={[510, 138, 90, 22]} /><Frame $b={[341, 169, 129, 19]} />
      <Frame $b={[447, 376, 143, 22]} /><Frame $b={[338, 291, 26, 25]} /><Frame $b={[825, 679, 44, 23]} />
      <Badge $x={43} $y={19}>1</Badge><Badge $x={43} $y={86}>2</Badge><Badge $x={552} $y={125}>3</Badge><Badge $x={481} $y={178}>4</Badge>
      <Badge $x={542} $y={386}>5</Badge><Badge $x={349} $y={280}>6</Badge><Badge $x={847} $y={668}>7</Badge>
    </Page>
  );
}
